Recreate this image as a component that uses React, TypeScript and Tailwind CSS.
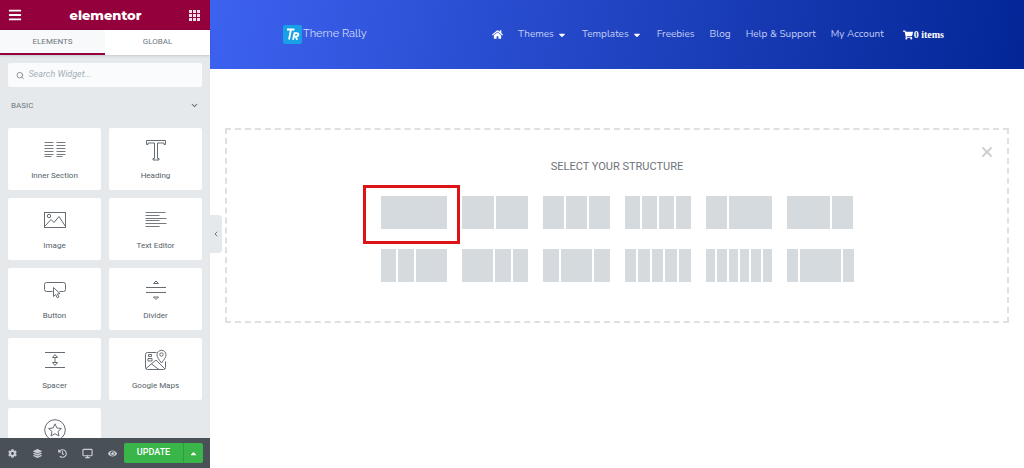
import type { ReactNode } from 'react';
import { FaBars, FaCaretDown, FaCaretUp, FaCog, FaEye, FaHistory, FaHome, FaLayerGroup, FaShoppingCart } from 'react-icons/fa';
import { ChevronDown, ChevronLeft, Monitor, Search, X } from 'lucide-react';

function Glyph({ children }: { children: ReactNode }) {
  return (
    <svg viewBox="0 0 24 24" className="size-6" fill="none" stroke="#656c73" strokeWidth="1" aria-hidden="true">
      {children}
    </svg>
  );
}

const widgets: { name: string; icon: ReactNode; iconOnly?: boolean }[] = [
  {
    name: 'Inner Section',
    icon: (
      <Glyph>
        <path d="M1.5 4.5h9M1.5 7.5h9M1.5 10.5h9M1.5 13.5h9M1.5 16.5h9M1.5 18.5h7M13.5 4.5h9M13.5 7.5h9M13.5 10.5h9M13.5 13.5h9M13.5 16.5h9M13.5 18.5h6" strokeWidth="0.9" />
      </Glyph>
    ),
  },
  {
    name: 'Heading',
    icon: (
      <Glyph>
        <path d="M2.500 2.500h19v4h-1.500V5h-6.500v15.500H15v1.500H9v-1.500h1.500V5H4v1.500H2.500z" />
      </Glyph>
    ),
  },
  {
    name: 'Image',
    icon: (
      <Glyph>
        <rect x="1.5" y="4.5" width="21" height="15" />
        <circle cx="6" cy="8" r="1.7" />
        <path d="M2 18l6-6.500 3 3 5-6 6.500 10" />
      </Glyph>
    ),
  },
  {
    name: 'Text Editor',
    icon: (
      <Glyph>
        <path d="M1.5 4.5h20M1.5 7.5h14M1.5 10.5h21M1.5 12.5h14M1.5 15.5h21M1.5 18.5h14" strokeWidth="0.9" />
      </Glyph>
    ),
  },
  {
    name: 'Button',
    icon: (
      <Glyph>
        <path d="M9.500 13.500h-6a2 2 0 0 1-2-2v-5a2 2 0 0 1 2-2h17a2 2 0 0 1 2 2v5a2 2 0 0 1-2 2h-4" />
        <path d="M10.500 9.500v9l2.200-2 1.500 3.200 1.700-.8-1.500-3 2.600-.3z" />
      </Glyph>
    ),
  },
  {
    name: 'Divider',
    icon: (
      <Glyph>
        <path d="M2 9.500h20M2 14.500h20M9.500 5.500L12 3l2.500 2.500zM9.500 19L12 21.500 14.500 19z" />
      </Glyph>
    ),
  },
  {
    name: 'Spacer',
    icon: (
      <Glyph>
        <path d="M2 4.500h20M2 19.500h20M12 9v6M9.500 9.500L12 6.500l2.500 3zM9.500 14.500l2.500 3 2.500-3z" />
      </Glyph>
    ),
  },
  {
    name: 'Google Maps',
    icon: (
      <Glyph>
        <path d="M12.500 4.500H3.500a2 2 0 0 0-2 2v13a2 2 0 0 0 2 2h16a2 2 0 0 0 2-2v-6M2 20.500l10-8.500 9 9M7.500 16L15 21.500" />
        <path d="M17.500 15c-3-4-4.500-6-4.500-8.200a4.500 4.500 0 0 1 9 0c0 2.200-1.500 4.200-4.500 8.200z" />
        <circle cx="17.5" cy="6.5" r="1.7" />
        <path d="M4.500 6.500h3v2h-3zM4 10.500h4v2.500H4z" />
      </Glyph>
    ),
  },
  {
    name: 'Icon',
    iconOnly: true,
    icon: (
      <Glyph>
        <circle cx="12" cy="12" r="10.3" />
        <path d="M12 5.800l1.900 4.200 4.500.5-3.400 3 1 4.500-4-2.300-4 2.300 1-4.500-3.400-3 4.500-.5z" />
      </Glyph>
    ),
  },
];

const structures: { name: string; columns: string; count: number }[] = [
  { name: '100', columns: 'grid-cols-1', count: 1 },
  { name: '50 / 50', columns: 'grid-cols-2', count: 2 },
  { name: '33 / 33 / 33', columns: 'grid-cols-3', count: 3 },
  { name: '25 / 25 / 25 / 25', columns: 'grid-cols-4', count: 4 },
  { name: '33 / 66', columns: 'grid-cols-[1fr_2fr]', count: 2 },
  { name: '66 / 33', columns: 'grid-cols-[2fr_1fr]', count: 2 },
  { name: '25 / 25 / 50', columns: 'grid-cols-[1fr_1fr_2fr]', count: 3 },
  { name: '50 / 25 / 25', columns: 'grid-cols-[2fr_1fr_1fr]', count: 3 },
  { name: '25 / 50 / 25', columns: 'grid-cols-[1fr_2fr_1fr]', count: 3 },
  { name: '20 × 5', columns: 'grid-cols-5', count: 5 },
  { name: '16 × 6', columns: 'grid-cols-6', count: 6 },
  { name: '16 / 66 / 16', columns: 'grid-cols-[1fr_4fr_1fr]', count: 3 },
];

const tools = [
  { name: 'Settings', icon: <FaCog /> },
  { name: 'Navigator', icon: <FaLayerGroup /> },
  { name: 'History', icon: <FaHistory /> },
  { name: 'Responsive mode', icon: <Monitor className="size-[11px] shrink-0" strokeWidth={2.5} /> },
  { name: 'Preview', icon: <FaEye /> },
];

const links = [
  { name: 'Themes', menu: true },
  { name: 'Templates', menu: true },
  { name: 'Freebies', menu: false },
  { name: 'Blog', menu: false },
  { name: 'Help & Support', menu: false },
  { name: 'My Account', menu: false },
];

function Sidebar() {
  return (
    <aside className="relative flex w-[210px] shrink-0 flex-col bg-[#e6e9ec] font-[Roboto,sans-serif] text-[#6d7882]">
      <header className="flex h-[30px] shrink-0 items-center justify-between bg-[#93003c] px-2 text-white">
        <button aria-label="Menu" className="text-[14px]">
          <FaBars />
        </button>
        <span className="font-[Montserrat,Inter,sans-serif] text-[13px] leading-none font-extrabold">elementor</span>
        <button aria-label="Widgets" className="mr-[2px]">
          <svg viewBox="0 0 11 11" className="size-[11px]" fill="#f3dfe8" aria-hidden="true">
            <path d="M0 0h3v3H0zM4 0h3v3H4zM8 0h3v3H8zM0 4h3v3H0zM4 4h3v3H4zM8 4h3v3H8zM0 8h3v3H0zM4 8h3v3H4zM8 8h3v3H8z" />
          </svg>
        </button>
      </header>
      <div className="grid h-[25px] shrink-0 grid-cols-2 bg-white text-[8px] shadow-sm">
        <button className="border-b-2 border-[#93003c] bg-[#f7f9fa]">ELEMENTS</button>
        <button className="border-b-2 border-white">GLOBAL</button>
      </div>
      <div className="flex min-h-0 flex-1 flex-col overflow-hidden px-2 pt-2">
        <label className="flex h-6 shrink-0 items-center gap-1 rounded-xs bg-[#fafbfc] px-2">
          <Search className="size-[9px] text-[#7d8790]" strokeWidth={2.5} />
          <input type="text" aria-label="Search Widget" placeholder="Search Widget..." className="w-full min-w-0 bg-transparent text-[9px] italic outline-none placeholder:text-[#a4afb7]" />
        </label>
        <button className="flex h-[41px] shrink-0 items-center justify-between px-[3px] pb-1 text-[8px]">
          BASIC
          <ChevronDown className="size-[9px]" strokeWidth={3} />
        </button>
        <div className="grid auto-rows-[62px] grid-cols-2 gap-2">
          {widgets.map((widget) => (
            <button key={widget.name} aria-label={widget.name} className="flex flex-col items-center gap-2 rounded-xs bg-white pt-[10px] text-[8px] leading-3 text-[#556068]">
              {widget.icon}
              {!widget.iconOnly && widget.name}
            </button>
          ))}
        </div>
      </div>
      <footer className="flex h-[30px] shrink-0 items-center justify-between bg-[#495157] pr-[7px] pl-2 text-[9px] text-[#c9cfd4]">
        <div className="flex gap-4">
          {tools.map((tool) => (
            <button key={tool.name} aria-label={tool.name} className="flex w-[9px] items-center justify-center">
              {tool.icon}
            </button>
          ))}
        </div>
        <div className="flex h-5 overflow-hidden rounded-xs bg-[#39b54a] text-white">
          <button className="w-[60px] border-r border-[#2f9d3f] text-[9px] font-medium">UPDATE</button>
          <button aria-label="Save options" className="flex w-[19px] items-center justify-center">
            <FaCaretUp />
          </button>
        </div>
      </footer>
      <button aria-label="Hide panel" className="absolute top-1/2 left-full z-10 flex h-[38px] w-3 -translate-y-1/2 items-center justify-center rounded-r-sm bg-[#e6e9ec]">
        <ChevronLeft className="size-2" strokeWidth={3} />
      </button>
    </aside>
  );
}

function SiteHeader() {
  return (
    <header className="flex h-[69px] items-center justify-between bg-linear-100 from-[#3d62f0] to-[#032596] pr-20 pl-[73px]">
      <a href="#home" className="flex items-center gap-px font-[Raleway,Lato,sans-serif] text-[11px] text-[#d3dcfb]">
        <svg viewBox="0 0 19 19" className="size-[19px]" aria-hidden="true">
          <rect width="19" height="19" rx="2" fill="#18a0e6" />
          <path d="M4 4.500h7.500M8 4.500L6 14.500M10 14.800l1.500-6.600h2.200c2.500 0 2 3.200-.5 3.200h-2.200M12.500 11.500l1.800 3.300" fill="none" stroke="#fff" strokeWidth="1.8" />
        </svg>
        Theme Rally
      </a>
      <nav className="flex items-center gap-[15px] font-[Nunito,Lato,sans-serif] text-[10px] text-[#c3cef7]">
        <a href="#home" aria-label="Home" className="text-[11px] text-white">
          <FaHome />
        </a>
        {links.map((link) => (
          <a key={link.name} href="#menu" className="flex items-center gap-[3px] whitespace-nowrap">
            {link.name}
            {link.menu && <FaCaretDown className="text-white" />}
          </a>
        ))}
        <a href="#cart" className="ml-1 flex items-center gap-px font-['Liberation_Serif',serif] text-[10px] font-bold whitespace-nowrap text-white">
          <FaShoppingCart />0 items
        </a>
      </nav>
    </header>
  );
}

export default function App() {
  return (
    <div className="flex h-screen overflow-hidden bg-white">
      <Sidebar />
      <main className="min-w-0 flex-1">
        <SiteHeader />
        <section className="relative mx-[15px] mt-[59px] flex flex-col items-center border-2 border-dashed border-[#dee0e3] pt-[29px] pb-[39px]">
          <button aria-label="Close" className="absolute top-[14px] right-3 text-[#cdd0d3]">
            <X className="size-4" strokeWidth={3} />
          </button>
          <h2 className="font-[Roboto,sans-serif] text-[11px] leading-4 text-[#6d7278]">SELECT YOUR STRUCTURE</h2>
          <div className="mt-[21px] grid w-[473px] grid-cols-6 gap-x-[15px] gap-y-5">
            {structures.map((structure, index) => (
              <button key={structure.name} aria-label={structure.name} className={`relative grid h-[33px] gap-[2px] ${structure.columns}`}>
                {Array.from({ length: structure.count }, (_, column) => (
                  <span key={column} className="h-full bg-[#d5dadf]" />
                ))}
                {index === 0 && <span className="absolute -top-[11px] -right-[13px] -bottom-[15px] -left-[18px] border-3 border-[#dc1418]" />}
              </button>
            ))}
          </div>
        </section>
      </main>
    </div>
  );
}
